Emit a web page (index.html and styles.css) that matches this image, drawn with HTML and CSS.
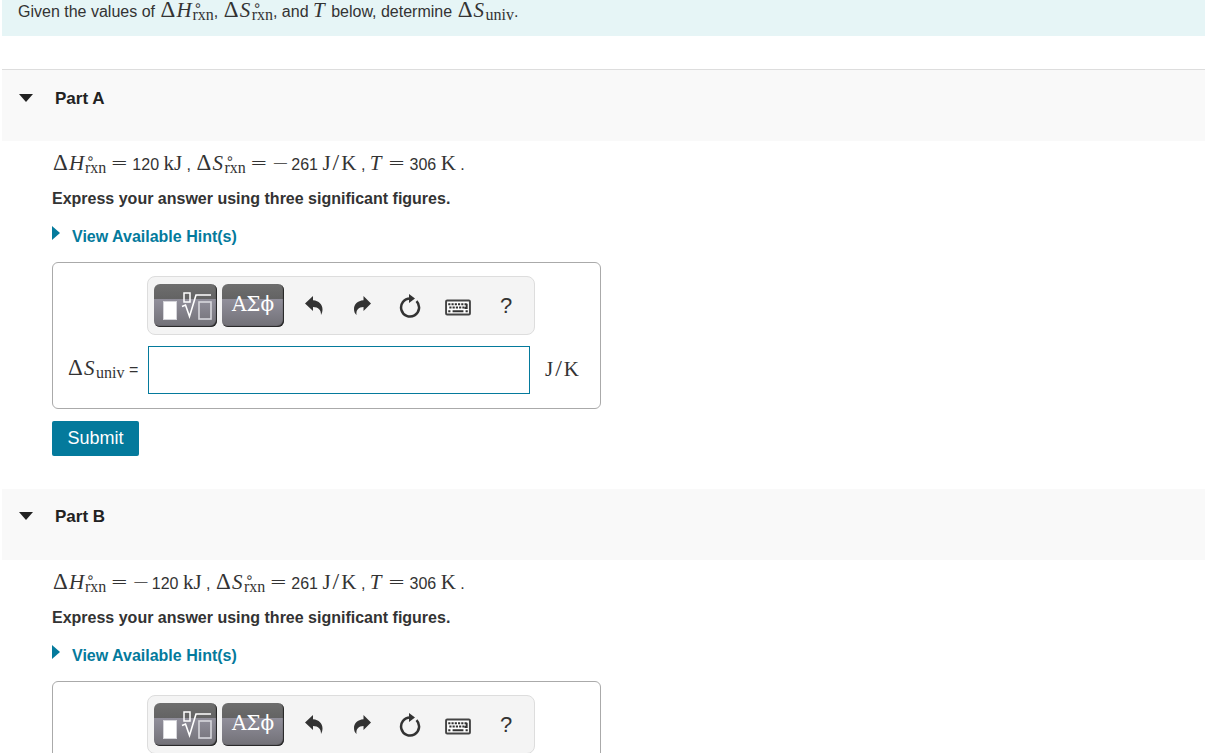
FILE: index.html
```html
<!DOCTYPE html>
<html lang="en">
<head>
  <meta charset="UTF-8" />
  <meta name="viewport" content="width=device-width, initial-scale=1.0" />
  <title>Entropy of the Universe</title>
  <link rel="stylesheet" href="styles.css">
</head>
<body>

  <!-- Icons shared by both toolbars -->
  <svg class="icon-defs" aria-hidden="true">
    <symbol id="icon-template" viewBox="0 0 52 30">
      <rect x="3.500" y="10.500" width="13" height="18" fill="#fff" stroke="#d5d5da"/>
      <rect x="24" y="2" width="6" height="9" fill="none" stroke="#fff" stroke-width="1.500"/>
      <path d="M22 15.500l3.500-1.500 4 11.500L36 4h15" fill="none" stroke="#fff" stroke-width="1.600"/>
      <rect x="39" y="11" width="12" height="17" fill="none" stroke="#d8d8dd" stroke-width="1.600"/>
    </symbol>
    <symbol id="icon-undo" viewBox="0 0 20 20">
      <path d="M1 7.500L9 0v4.300c6 .4 9.500 4.500 9.500 9 0 2-.5 4-1.500 5.700.1-5-2.500-7.700-8-7.900V15z" fill="#333"/>
    </symbol>
    <symbol id="icon-redo" viewBox="0 0 20 20">
      <path d="M19 7.500L11.500 0v4.300C5.500 4.700 2 8.500 2 13c0 2.500.8 4.500 2.500 6-.6-5 2-7.700 7-7.900V15z" fill="#333"/>
    </symbol>
    <symbol id="icon-reset" viewBox="0 0 24 24">
      <path d="M18.500 7.200A9 9 0 1 1 12 4.500" fill="none" stroke="#333" stroke-width="2.500"/>
      <path d="M11 0l6 4.500-6 4.500z" fill="#333"/>
    </symbol>
    <symbol id="icon-keyboard" viewBox="0 0 24 16">
      <rect x="1" y="1" width="22" height="13" rx="1" fill="#fff" stroke="#444" stroke-width="1.800"/>
      <path d="M3 4.500h18" stroke="#333" stroke-width="1.800" stroke-dasharray="2 1"/>
      <path d="M4 7.500h16" stroke="#333" stroke-width="1.800" stroke-dasharray="2 1"/>
      <path d="M20 4v4h-2M3 11h2m2 0h10m2 0h2" fill="none" stroke="#333" stroke-width="1.800"/>
    </symbol>
  </svg>

  <div class="intro">
    <p>Given the values of <span class="math"><span class="delta">Δ</span><i class="h">H</i><span class="stack"><sup>∘</sup><sub>rxn</sub></span></span>, <span class="math"><span class="delta">Δ</span><i class="s">S</i><span class="stack"><sup>∘</sup><sub>rxn</sub></span></span>, and <i class="math t">T</i> below, determine <span class="math"><span class="delta">Δ</span><i class="s">S</i><sub>univ</sub></span>.</p>
  </div>

  <main>
    <section class="part">
      <header class="part-header">
        <button class="toggle" type="button" aria-label="Collapse Part A"></button>
        <h2>Part A</h2>
      </header>
      <div class="part-body">
        <p class="values"><span class="math"><span class="delta">Δ</span><i class="h">H</i><span class="stack"><sup>∘</sup><sub>rxn</sub></span><span class="op">=</span></span>120 <span class="math">kJ</span> , <span class="math"><span class="delta">Δ</span><i class="s">S</i><span class="stack"><sup>∘</sup><sub>rxn</sub></span><span class="op">=</span><span class="op minus">−</span></span> 261 <span class="math">J<span class="slash">/</span>K</span> , <span class="math"><i class="t">T</i><span class="op">=</span></span>306 <span class="math">K</span> .</p>
        <p class="instructions">Express your answer using three significant figures.</p>
        <a class="hint" href="#hints-a">View Available Hint(s)</a>
        <form class="answer">
          <div class="answer-box">
            <div class="toolbar">
              <button class="key key-template" type="button" aria-label="Templates"><svg><use href="#icon-template"/></svg></button>
              <button class="key key-greek" type="button">ΑΣϕ</button>
              <button class="tool" type="button" aria-label="Undo"><svg><use href="#icon-undo"/></svg></button>
              <button class="tool" type="button" aria-label="Redo"><svg><use href="#icon-redo"/></svg></button>
              <button class="tool tool-reset" type="button" aria-label="Reset"><svg><use href="#icon-reset"/></svg></button>
              <button class="tool tool-keyboard" type="button" aria-label="Keyboard shortcuts"><svg><use href="#icon-keyboard"/></svg></button>
              <button class="tool" type="button">?</button>
            </div>
            <label for="answer-a"><span class="math"><span class="delta">Δ</span><i class="s">S</i><sub>univ</sub></span> =</label>
            <input id="answer-a" type="text">
            <span class="unit math">J<span class="slash">/</span>K</span>
          </div>
          <button class="submit" type="submit">Submit</button>
        </form>
      </div>
    </section>

    <section class="part">
      <header class="part-header">
        <button class="toggle" type="button" aria-label="Collapse Part B"></button>
        <h2>Part B</h2>
      </header>
      <div class="part-body">
        <p class="values"><span class="math"><span class="delta">Δ</span><i class="h">H</i><span class="stack"><sup>∘</sup><sub>rxn</sub></span><span class="op">=</span><span class="op minus">−</span></span> 120 <span class="math">kJ</span> , <span class="math"><span class="delta">Δ</span><i class="s">S</i><span class="stack"><sup>∘</sup><sub>rxn</sub></span><span class="op">=</span></span>261 <span class="math">J<span class="slash">/</span>K</span> , <span class="math"><i class="t">T</i><span class="op">=</span></span>306 <span class="math">K</span> .</p>
        <p class="instructions">Express your answer using three significant figures.</p>
        <a class="hint" href="#hints-b">View Available Hint(s)</a>
        <form class="answer">
          <div class="answer-box">
            <div class="toolbar">
              <button class="key key-template" type="button" aria-label="Templates"><svg><use href="#icon-template"/></svg></button>
              <button class="key key-greek" type="button">ΑΣϕ</button>
              <button class="tool" type="button" aria-label="Undo"><svg><use href="#icon-undo"/></svg></button>
              <button class="tool" type="button" aria-label="Redo"><svg><use href="#icon-redo"/></svg></button>
              <button class="tool tool-reset" type="button" aria-label="Reset"><svg><use href="#icon-reset"/></svg></button>
              <button class="tool tool-keyboard" type="button" aria-label="Keyboard shortcuts"><svg><use href="#icon-keyboard"/></svg></button>
              <button class="tool" type="button">?</button>
            </div>
            <label for="answer-b"><span class="math"><span class="delta">Δ</span><i class="s">S</i><sub>univ</sub></span> =</label>
            <input id="answer-b" type="text">
            <span class="unit math">J<span class="slash">/</span>K</span>
          </div>
          <button class="submit" type="submit">Submit</button>
        </form>
      </div>
    </section>
  </main>

</body>
</html>
```

FILE: styles.css
```css
* {
  box-sizing: border-box;
}

body {
  margin: 0 0 0 2px;
  font-family: "Liberation Sans", Arial, sans-serif;
  font-size: 16px;
  line-height: 24px;
  color: #333;
  background-color: #fff;
}

p,
h2 {
  margin: 0;
}

button {
  padding: 0;
  border: none;
  background: none;
  font-family: inherit;
  color: inherit;
  cursor: pointer;
}

.icon-defs {
  display: none;
}

.intro {
  height: 36px;
  padding: 0 16px;
  margin-bottom: 33px;
  line-height: 20px;
  background-color: #e6f5f6;
}

/* Math text */
.math {
  font-family: "Liberation Serif", serif;
  font-size: 21px;
  line-height: 20px;
  white-space: nowrap;
}

.delta,
.h,
.s,
.op {
  display: inline-block;
}

.delta {
  width: 17px;
  font-size: 23px;
  text-align: center;
}

.h {
  width: 16px;
}

.s {
  width: 12px;
}

.t {
  padding-right: 2px;
}

.math sub {
  font-size: 16px;
  line-height: 16px;
  vertical-align: -3px;
}

.stack {
  position: relative;
}

.stack sup {
  position: absolute;
  left: 1px;
  top: -1px;
  font-family: "DejaVu Sans", sans-serif;
  font-size: 14px;
  line-height: 16px;
}

.op {
  width: 26px;
  font-family: "DejaVu Sans", sans-serif;
  font-weight: 200;
  text-align: center;
}

.op.minus {
  width: 15px;
}

.slash {
  margin: 0 2px;
  font-size: 24px;
}

/* Parts */
.part-header {
  display: flex;
  align-items: flex-start;
  height: 71px;
  padding-top: 16px;
  background-color: #f9f9f9;
}

.part:first-child .part-header {
  height: 72px;
  padding-top: 17px;
  border-top: 1px solid #ddd;
}

.part-header h2 {
  font-size: 17px;
  line-height: 24px;
  color: #222;
}

.toggle {
  width: 53px;
  height: 22px;
  padding-left: 17px;
}

.toggle::before {
  content: "";
  display: block;
  width: 14px;
  height: 8px;
  background-color: #222;
  clip-path: polygon(0 0, 100% 0, 50% 100%);
}

.part-body {
  padding: 11px 50px 33px;
}

.values {
  height: 24px;
}

.instructions {
  margin-top: 11px;
  font-weight: bold;
}

.hint {
  display: flex;
  width: fit-content;
  margin-top: 14px;
  font-weight: bold;
  color: #047a9c;
  text-decoration: none;
}

.hint::before {
  content: "";
  width: 8px;
  height: 14px;
  margin: 1px 12px 0 0;
  background-color: #047a9c;
  clip-path: polygon(0 0, 100% 50%, 0 100%);
}

.hint:hover {
  text-decoration: underline;
}

/* Answer form */
.answer-box {
  display: grid;
  grid-template-columns: 80px minmax(0, 388px) 1fr;
  row-gap: 11px;
  align-items: center;
  max-width: 549px;
  margin: 13px 0 12px;
  padding: 13px 14px 14px;
  border: 1px solid #aaa;
  border-radius: 6px;
}

.toolbar {
  grid-column: 2;
  display: flex;
  align-items: center;
  height: 59px;
  padding-left: 6px;
  border: 1px solid #ddd;
  border-radius: 8px;
  background-color: #f4f4f4;
}

.answer-box label {
  grid-column: 1;
  white-space: nowrap;
}

.answer-box input {
  height: 48px;
  margin: 0 5px 0 1px;
  padding: 0 10px;
  border: 1px solid #047a9c;
  font-size: 18px;
}

.unit {
  padding: 0 0 4px 10px;
}

.key {
  height: 43px;
  margin-right: 5px;
  border-radius: 6px;
  background: linear-gradient(#6e6e6e, #636363 15px, #918f9b 15px, #717076);
  box-shadow: inset -1px -1px 1px #222;
  color: #fff;
}

.key-template {
  width: 63px;
}

.key-template svg {
  display: block;
  width: 52px;
  height: 30px;
  margin: 0 auto;
}

.key-greek {
  width: 62px;
  margin-right: 6px;
  padding-bottom: 4px;
  font-family: "DejaVu Serif", serif;
  font-size: 20px;
}

.tool {
  width: 48px;
  height: 43px;
  font-size: 22px;
  color: #333;
}

.tool svg {
  display: block;
  width: 20px;
  height: 20px;
  margin: 0 auto;
}

.tool-reset svg {
  width: 24px;
  height: 24px;
}

.tool-keyboard svg {
  width: 26px;
  height: 18px;
}

.tool-keyboard {
  padding-top: 4px;
}

.submit {
  display: block;
  width: 87px;
  height: 35px;
  border-radius: 2px;
  background-color: #047a9c;
  color: #fff;
  font-size: 18px;
}

.submit:hover {
  background-color: #036580;
}
```
